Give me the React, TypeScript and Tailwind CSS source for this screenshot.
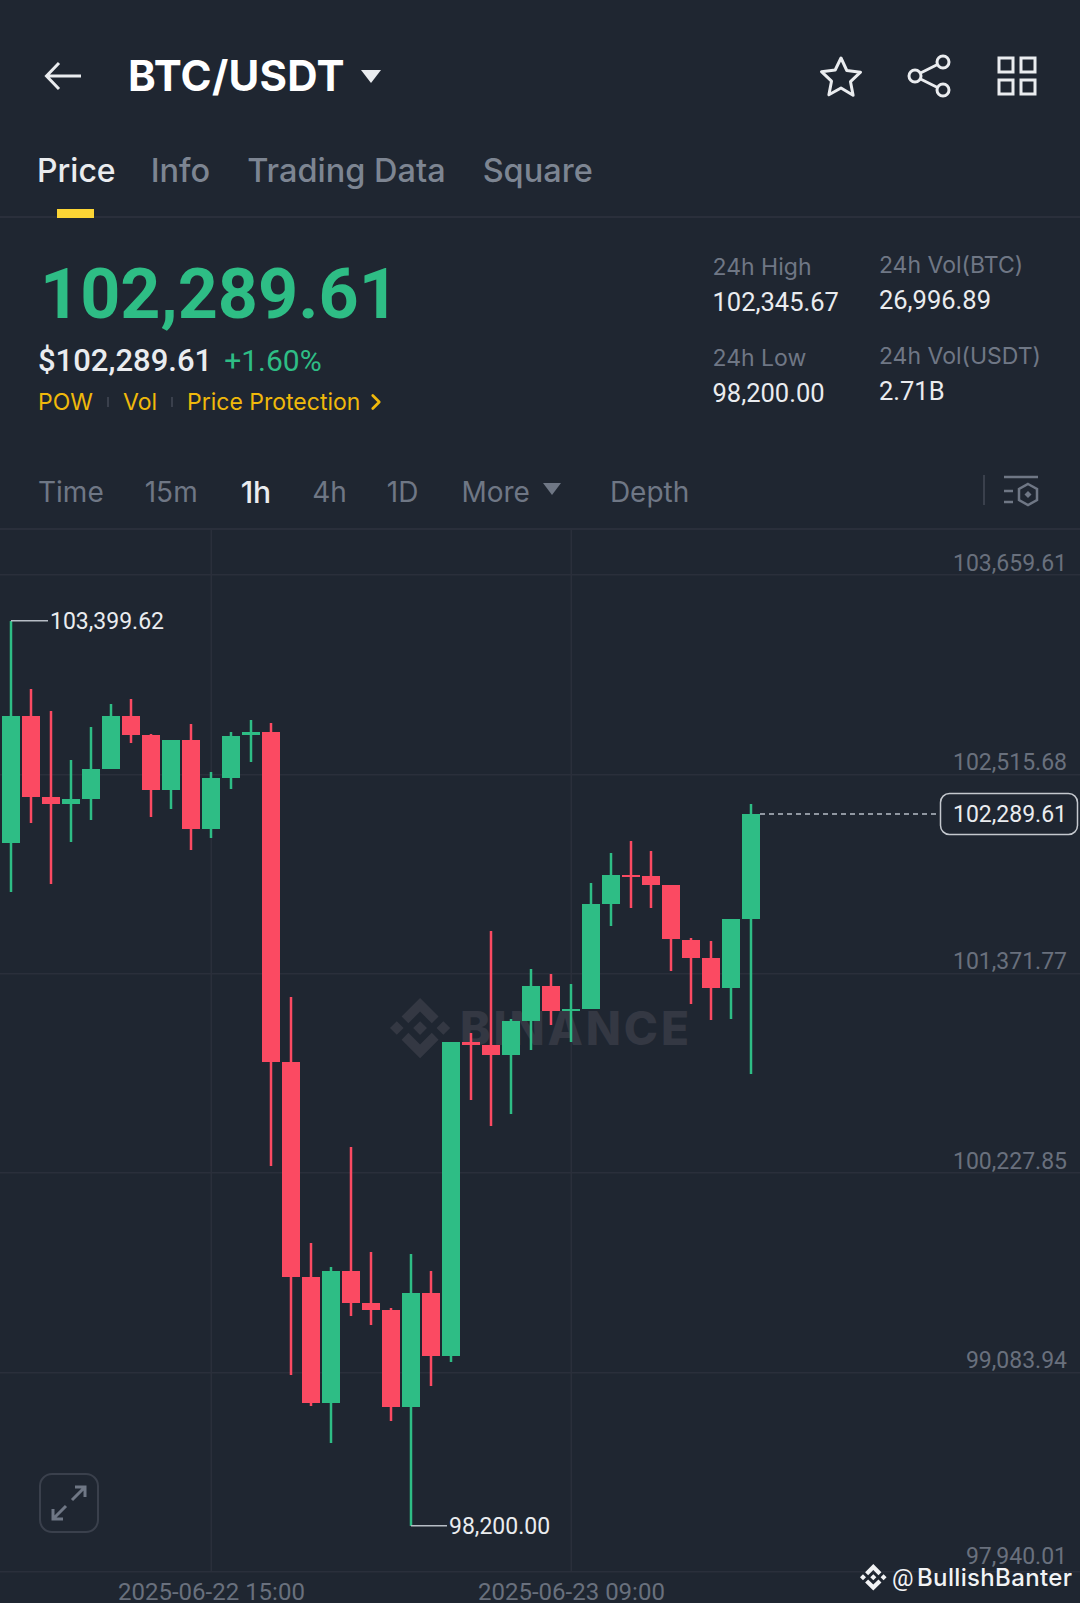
import { ChevronRight } from "lucide-react";

const UP = "#2ebd85";
const DOWN = "#fb4a62";

// [centre x, wick top, wick bottom, body top, body bottom, up?]
const CANDLES: [number, number, number, number, number, boolean][] = [
  [11, 621, 892, 716, 843, true],
  [31, 689, 823, 716, 797, false],
  [51, 711, 884, 797, 804, false],
  [71, 760, 842, 799, 804, true],
  [91, 727, 820, 769, 799, true],
  [111, 704, 769, 716, 769, true],
  [131, 699, 743, 716, 735, false],
  [151, 734, 817, 735, 790, false],
  [171, 740, 809, 740, 790, true],
  [191, 724, 850, 740, 829, false],
  [211, 772, 838, 778, 829, true],
  [231, 732, 789, 736, 778, true],
  [251, 720, 762, 732, 735, true],
  [271, 723, 1166, 732, 1062, false],
  [291, 997, 1375, 1062, 1277, false],
  [311, 1243, 1406, 1277, 1403, false],
  [331, 1267, 1443, 1271, 1403, true],
  [351, 1147, 1316, 1271, 1303, false],
  [371, 1252, 1325, 1303, 1310, false],
  [391, 1308, 1421, 1310, 1407, false],
  [411, 1254, 1526, 1293, 1407, true],
  [431, 1271, 1386, 1293, 1356, false],
  [451, 1042, 1362, 1042, 1356, true],
  [471, 1033, 1100, 1042, 1045, false],
  [491, 931, 1126, 1045, 1055, false],
  [511, 1019, 1114, 1021, 1055, true],
  [531, 969, 1050, 986, 1021, true],
  [551, 974, 1025, 986, 1011, false],
  [571, 984, 1042, 1009, 1011, true],
  [591, 883, 1009, 904, 1009, true],
  [611, 853, 926, 875, 904, true],
  [631, 841, 908, 875, 877, false],
  [651, 851, 908, 876, 885, false],
  [671, 885, 971, 885, 939, false],
  [691, 938, 1004, 940, 958, false],
  [711, 941, 1020, 958, 988, false],
  [731, 919, 1019, 919, 988, true],
  [751, 804, 1074, 814, 919, true],
];

const GRID_Y = [574, 774, 973, 1172, 1372, 1571];

const AXIS: [string, number][] = [
  ["103,659.61", 571],
  ["102,515.68", 770],
  ["101,371.77", 969],
  ["100,227.85", 1169],
  ["99,083.94", 1368],
  ["97,940.01", 1564],
];

const LOGO =
  "M38.73 53.2l24.59-24.58 24.6 24.6 14.3-14.31L63.32 0 24.42 38.9zM0 63.31L14.3 49l14.31 14.31-14.31 14.3zm38.73 10.11l24.59 24.59 24.6-24.6 14.31 14.29-38.9 38.91-38.91-38.88zm59.27-10.1l14.3-14.31 14.31 14.3-14.31 14.3zM77.83 63.3L63.32 48.78 52.59 59.51l-1.24 1.23-2.54 2.54 14.51 14.5 14.51-14.47z";

function Stat({ label, value }: { label: string; value: string }) {
  return (
    <div className="flex flex-col">
      <span className="text-[23px] leading-[30px] text-[#6f7785]">{label}</span>
      <span className="mt-[5px] font-[Roboto,sans-serif] text-[25.500px] leading-[30px] text-[#eaecef]">{value}</span>
    </div>
  );
}

function Chart() {
  return (
    <svg width={1080} height={1073} viewBox="0 530 1080 1073" className="block" fontFamily="Roboto, sans-serif">
      {GRID_Y.map((y) => (
        <rect key={y} x={0} y={y} width={1080} height={1.5} fill="#2a2f3b" />
      ))}
      <rect x={210.5} y={530} width={1.5} height={1041} fill="#2a2f3b" />
      <rect x={570.5} y={530} width={1.5} height={1041} fill="#2a2f3b" />

      {/* watermark */}
      <path d={LOGO} transform="translate(390 998) scale(0.475)" fill="#343843" />
      <text x={460} y={1045} fontFamily="Inter, sans-serif" fontSize={46} fontWeight={800} fill="#343843" textLength={229}>
        BINANCE
      </text>

      {CANDLES.map(([x, high, low, top, bottom, up]) => (
        <g key={x} fill={up ? UP : DOWN}>
          <rect x={x - 1.25} y={high} width={2.5} height={low - high} />
          <rect x={x - 9} y={top} width={18} height={bottom - top} />
        </g>
      ))}

      {/* high / low markers */}
      <rect x={11} y={620} width={37} height={1.5} fill="#b7bdc6" />
      <text x={50} y={629} fontSize={23} fill="#eaecef">103,399.62</text>
      <rect x={411} y={1525} width={36} height={1.5} fill="#b7bdc6" />
      <text x={449} y={1534} fontSize={23} fill="#eaecef">98,200.00</text>

      {/* axis */}
      {AXIS.map(([label, y]) => (
        <text key={label} x={1067} y={y} textAnchor="end" fontSize={23} fill="#69707d">
          {label}
        </text>
      ))}

      {/* last price */}
      <line x1={760} y1={814} x2={938} y2={814} stroke="#b7bdc6" strokeWidth={1.5} strokeDasharray="5 4" />
      <rect x={940.5} y={793.5} width={137} height={41} rx={9} fill="#1f2631" stroke="#c4c8ce" strokeWidth={1.5} />
      <text x={1067} y={822} textAnchor="end" fontSize={23} fill="#eaecef">102,289.61</text>

      {/* fullscreen button */}
      <rect x={40} y={1474} width={58} height={58} rx={12} fill="none" stroke="#3a404c" strokeWidth={2} />
      <path
        d="M72 1500l13-13m-10 0h10v10M66 1506l-13 13m0-10v10h10"
        fill="none"
        stroke="#6f7785"
        strokeWidth={3}
      />

      <text x={118} y={1600} fontSize={24} fill="#69707d">2025-06-22 15:00</text>
      <text x={478} y={1600} fontSize={24} fill="#69707d">2025-06-23 09:00</text>

      {/* repost watermark */}
      <path d={LOGO} transform="translate(860 1564) scale(0.21)" fill="#f2f3f5" />
      <text x={892} y={1586} fontSize={24} fill="#f2f3f5">@</text>
      <text x={917} y={1586} fontFamily="Inter, sans-serif" fontSize={24} fontWeight={500} fill="#f2f3f5" textLength={155}>
        BullishBanter
      </text>
    </svg>
  );
}

export default function App() {
  return (
    <div className="flex h-[1603px] w-[1080px] flex-col overflow-hidden bg-[#1f2631] font-[Inter,sans-serif]">
      {/* Header */}
      <div className="flex h-[152px] items-center pl-[44px] pr-[43px]">
        <svg width={38} height={30} viewBox="0 0 38 30" fill="none" stroke="#eaecef" strokeWidth={3}>
          <path d="M37 15H3M15 2L2.500 15 15 28" />
        </svg>
        <span className="ml-[46px] text-[42px] font-bold leading-none tracking-[0.25px] text-white">BTC/USDT</span>
        <svg width={20} height={14} viewBox="0 0 20 14" className="ml-[16px]" fill="#eaecef">
          <path d="M0 1h20L10 14z" />
        </svg>
        <div className="ml-auto flex items-center gap-[44px]">
          <svg width={44} height={42} viewBox="0 0 44 42" fill="none" stroke="#eaecef" strokeWidth={3} strokeLinejoin="round">
            <path d="M22 3l5.800 12.500 13.700 1.700-10 9.500 2.600 13.500L22 33l-12.100 6.700 2.600-13.500-10-9.500 13.700-1.700z" />
          </svg>
          <svg width={44} height={44} viewBox="0 0 44 44" fill="none" stroke="#eaecef" strokeWidth={3}>
            <circle cx={8} cy={22} r={6} />
            <circle cx={36} cy={8} r={6} />
            <circle cx={36} cy={36} r={6} />
            <path d="M13.500 19l17-8.500M13.500 25l17 8.500" />
          </svg>
          <svg width={40} height={40} viewBox="0 0 40 40" className="ml-[2px]" fill="none" stroke="#eaecef" strokeWidth={3}>
            <rect x={2} y={2} width={14} height={14} />
            <rect x={24} y={2} width={14} height={14} />
            <rect x={2} y={24} width={14} height={14} />
            <rect x={24} y={24} width={14} height={14} />
          </svg>
        </div>
      </div>

      {/* Tabs */}
      <div className="flex h-[66px] items-start gap-[37px] border-b-2 border-[#2a2f3b] pl-[37px] text-[32.500px] font-medium leading-[38px] text-[#7d8592]">
        <div className="relative -mr-[2px] h-full text-[32px]">
          <span className="text-[#eaecef]">Price</span>
          <div className="absolute bottom-[-2px] left-[20px] h-[9px] w-[37px] bg-[#fcd535]" />
        </div>
        <span>Info</span>
        <span>Trading Data</span>
        <span>Square</span>
      </div>

      {/* Ticker */}
      <div className="flex h-[230px] pl-[38px]">
        <div className="flex flex-col">
          <span className="mt-[36px] pl-[2px] font-[Roboto,sans-serif] text-[70px] font-bold leading-[80px] text-[#2ebd85]">102,289.61</span>
          <div className="mt-[9px] flex items-baseline gap-[12px] font-[Roboto,sans-serif] text-[31px] leading-[36px]">
            <span className="font-medium text-[#eaecef]">$102,289.61</span>
            <span className="text-[30px] text-[#2ebd85]">+1.60%</span>
          </div>
          <div className="mt-[6px] flex items-center text-[23px] leading-[34px] text-[#f0b90b]">
            <span>POW</span>
            <div className="mx-[14px] h-[10px] w-[2px] bg-[#3a404c]" />
            <span>Vol</span>
            <div className="mx-[14px] h-[10px] w-[2px] bg-[#3a404c]" />
            <span>Price Protection</span>
            <ChevronRight size={26} strokeWidth={2.5} className="ml-[3px]" />
          </div>
        </div>
        <div className="ml-auto mt-[34px] flex gap-[40px] pr-[39px]">
          <div className="flex flex-col gap-[26px]">
            <Stat label="24h High" value="102,345.67" />
            <Stat label="24h Low" value="98,200.00" />
          </div>
          <div className="-mt-[2px] flex flex-col gap-[26px]">
            <Stat label="24h Vol(BTC)" value="26,996.89" />
            <Stat label="24h Vol(USDT)" value="2.71B" />
          </div>
        </div>
      </div>

      {/* Intervals */}
      <div className="flex h-[82px] items-start border-b-2 border-[#2a2f3b] pl-[38px] pt-[24px] text-[28px] leading-[40px] text-[#6f7785]">
        <span>Time</span>
        <span className="ml-[41px]">15m</span>
        <span className="ml-[43px] text-[30px] font-medium text-[#eaecef]">1h</span>
        <span className="ml-[41px]">4h</span>
        <span className="ml-[40px]">1D</span>
        <span className="ml-[43px]">More</span>
        <svg width={18} height={12} viewBox="0 0 18 12" className="ml-[13px] mt-[11px]" fill="#6f7785">
          <path d="M0 0h18L9 12z" />
        </svg>
        <span className="ml-[49px]">Depth</span>
        <div className="ml-auto mr-[18px] mt-[3px] h-[30px] w-[2px] bg-[#3a404c]" />
        <svg width={36} height={32} viewBox="0 0 36 32" className="mr-[41px] mt-[3px]" fill="none" stroke="#6f7785" strokeWidth={2.5}>
          <path d="M1 2h34M1 16h9M1 27h9" />
          <path d="M25 9l9 5v11l-9 5-9-5V14z" />
          <path d="M25 16l3.500 3.500-3.500 3.500-3.500-3.500z" fill="#6f7785" stroke="none" />
        </svg>
      </div>

      <Chart />
    </div>
  );
}
